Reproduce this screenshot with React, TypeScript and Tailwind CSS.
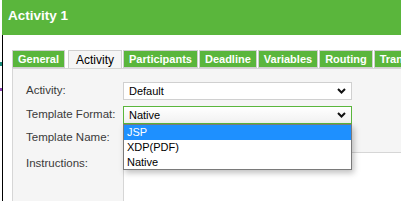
import React from "react"

const tabs = ["General", "Activity", "Participants", "Deadline", "Variables", "Routing", "Transitions"]

function Chevron() {
  return (
    <svg width="9" height="6" viewBox="0 0 9 6" className="shrink-0">
      <polyline points="1,1 4.5,4.5 8,1" fill="none" stroke="#111" strokeWidth="2" />
    </svg>
  )
}

function App() {
  return (
    <div
      className="w-[401px] h-[201px] overflow-hidden bg-white flex"
      style={{ fontFamily: '"Liberation Sans", Arial, sans-serif' }}
    >
      {/* left page edge with stray marks */}
      <div className="w-[2px] shrink-0 flex flex-col">
        <div className="h-[62px] shrink-0" />
        <div className="h-[4px] shrink-0 bg-[#1a8c7a]" />
        <div className="h-[22px] shrink-0" />
        <div className="h-[3px] shrink-0 bg-[#8a3fb0]" />
      </div>

      <div className="flex-1 flex flex-col min-w-0 min-h-0">
        {/* header */}
        <div className="h-[35px] shrink-0 bg-[#5ab63c] flex items-center pl-[6px] pb-[3px]">
          <span className="text-white font-bold text-[13.5px]">Activity 1</span>
        </div>

        <div className="flex-1 min-h-0 border-l border-black pl-[9px] pt-[14px] flex flex-col">
          {/* tabs */}
          <div className="flex items-end whitespace-nowrap shrink-0">
            {tabs.map((t) =>
              t === "Activity" ? (
                <div
                  key={t}
                  className="h-[19px] ml-[3px] px-[7px] bg-[#f5f5f5] border border-b-0 border-[#cfcfcf] flex items-center text-[12px] text-black relative top-[1px]"
                >
                  {t}
                </div>
              ) : (
                <div
                  key={t}
                  className="h-[18px] ml-[1px] first:ml-0 px-[5px] bg-[#5ab63c] border border-[#cfcfcf] flex items-center text-[11px] font-bold text-white"
                >
                  {t}
                </div>
              )
            )}
          </div>

          {/* panel */}
          <div className="flex-1 bg-[#f5f5f5] border-l border-t border-[#d6d6d6] pl-[13px] pt-[13px] relative">
            <div className="flex items-center h-[18px]">
              <span className="w-[97px] shrink-0 text-[11.5px] text-[#3a3a3a]">Activity:</span>
              <div className="w-[229px] h-[18px] shrink-0 bg-white border border-[#d0d0d0] flex items-center justify-between pl-[5px] pr-[5px] text-[11px] text-black">
                <span>Default</span>
                <Chevron />
              </div>
            </div>

            <div className="flex items-center h-[18px] mt-[6px]">
              <span className="w-[97px] shrink-0 text-[11.5px] text-[#3a3a3a]">Template Format:</span>
              <div className="relative shrink-0">
                <div className="w-[229px] h-[18px] bg-gradient-to-b from-white to-[#f1f1f1] border border-[#5ab63c] flex items-center justify-between pl-[5px] pr-[5px] text-[11px] text-black">
                  <span>Native</span>
                  <Chevron />
                </div>
                {/* open list */}
                <div className="absolute left-0 top-[18px] w-[229px] bg-white border border-[#7a7a7a] shadow-[2px_3px_6px_rgba(0,0,0,0.25)] z-10 text-[11px]">
                  <div className="h-[15px] bg-[#1e90ff] text-white pl-[3px] flex items-center">JSP</div>
                  <div className="h-[15px] text-black pl-[3px] flex items-center">XDP(PDF)</div>
                  <div className="h-[14px] text-black pl-[3px] flex items-center">Native</div>
                </div>
              </div>
            </div>

            <div className="flex items-center h-[18px] mt-[5px]">
              <span className="w-[97px] shrink-0 text-[11.5px] text-[#3a3a3a]">Template Name:</span>
              <div className="w-[229px] h-[18px] shrink-0 bg-white border border-[#d0d0d0]" />
            </div>

            <div className="flex items-start mt-[5px]">
              <span className="w-[97px] shrink-0 text-[11.5px] text-[#3a3a3a] pt-[3px]">Instructions:</span>
              <div className="w-[300px] h-[60px] bg-white border border-[#d6d6d6] shrink-0" />
            </div>
          </div>
        </div>
      </div>
    </div>
  )
}

export default App
